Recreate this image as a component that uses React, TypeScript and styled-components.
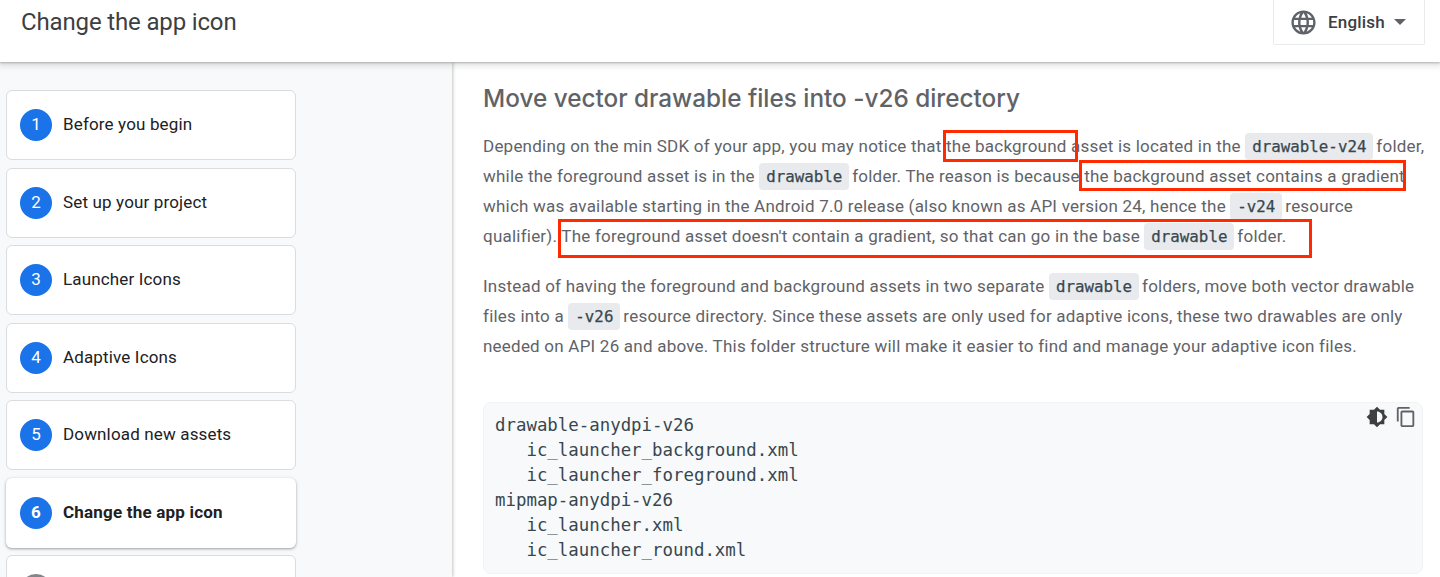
import React from 'react';
import styled, { createGlobalStyle } from 'styled-components';

const GlobalStyle = createGlobalStyle`
  html, body {
    margin: 0;
    height: 100%;
    overflow: hidden;
    background: #fff;
    font-family: Roboto, "Liberation Sans", sans-serif;
  }
`;

const Page = styled.div`
  display: flex;
  flex-direction: column;
  width: 1440px;
  height: 577px;
  overflow: hidden;
`;

const Header = styled.header`
  position: relative;
  z-index: 2;
  flex: 0 0 62px;
  display: flex;
  justify-content: space-between;
  align-items: flex-start;
  padding: 0 15px 0 21px;
  background: #fff;
  box-shadow: 0 1px 2px rgba(60, 64, 67, 0.3), 0 2px 6px 2px rgba(60, 64, 67, 0.15);
`;

const Title = styled.h1`
  margin: 0;
  font-size: 24px;
  font-weight: 400;
  line-height: 44px;
  letter-spacing: -0.15px;
  color: #3c4043;
`;

const LangButton = styled.div`
  display: flex;
  align-items: center;
  box-sizing: border-box;
  width: 152px;
  height: 45px;
  padding: 0 17px;
  border: 1px solid #e8eaed;
  border-top: none;
  border-radius: 0 0 2px 2px;
  font-size: 17px;
  font-weight: 500;
  letter-spacing: 0.2px;
  color: #3c4043;
`;

const LangLabel = styled.span`
  margin-left: 10px;
`;

const Caret = styled.span`
  margin-left: 9px;
  border-top: 6px solid #5f6368;
  border-left: 6.5px solid transparent;
  border-right: 6.5px solid transparent;
`;

const Body = styled.div`
  flex: 1;
  display: flex;
  min-height: 0;
`;

const Sidebar = styled.nav`
  position: relative;
  z-index: 1;
  flex: 0 0 452px;
  box-sizing: border-box;
  padding: 28px 0 0 6px;
  background: #f8f9fa;
  box-shadow: 1px 0 3px rgba(60, 64, 67, 0.3);
  display: flex;
  flex-direction: column;
  gap: 7.5px;
`;

const StepCard = styled.div<{ $active?: boolean }>`
  flex: 0 0 70px;
  box-sizing: border-box;
  width: 290px;
  display: flex;
  align-items: center;
  padding-left: ${p => (p.$active ? 14 : 13)}px;
  gap: 11px;
  background: #fff;
  border-radius: 6px;
  border: ${p => (p.$active ? 'none' : '1px solid #dadce0')};
  box-shadow: ${p =>
    p.$active
      ? '0 1px 2px rgba(60, 64, 67, 0.3), 0 1px 3px 1px rgba(60, 64, 67, 0.15)'
      : 'none'};
  font-size: 17px;
  font-weight: ${p => (p.$active ? 700 : 400)};
  letter-spacing: ${p => (p.$active ? 0.2 : 0.15)}px;
  color: #202124;
`;

const StepLabel = styled.span`
  margin-top: -2px;
`;

const StepNumber = styled.span<{ $pending?: boolean }>`
  flex: 0 0 32px;
  height: 32px;
  border-radius: 50%;
  background: ${p => (p.$pending ? '#80868b' : '#1a73e8')};
  color: #fff;
  font-size: 17px;
  letter-spacing: 0;
  line-height: 31px;
  text-align: center;
`;

const Content = styled.main`
  position: relative;
  flex: 1;
  box-sizing: border-box;
  padding: 18px 12px 0 31px;
  color: #5f6368;
  font-size: 17px;
  letter-spacing: 0.22px;
  line-height: 30px;
`;

const Heading = styled.h2`
  margin: 0 0 15px;
  font-family: Inter, sans-serif;
  font-size: 24.3px;
  font-weight: 550;
  letter-spacing: 0;
  line-height: 36px;
  color: #5f6368;
`;

const Paragraph = styled.p`
  margin: 0 0 20px;
`;

const InlineCode = styled.code`
  margin-right: -1.5px;
  padding: 4px 7px;
  border-radius: 4px;
  background: #e8eaed;
  color: #37474f;
  font-family: "DejaVu Sans Mono", monospace;
  font-size: 15.8px;
  line-height: 20px;
  letter-spacing: 0;
  -webkit-text-stroke: 0.25px #37474f;
`;

const CodeBlock = styled.div`
  position: relative;
  box-sizing: border-box;
  width: 940px;
  height: 172px;
  margin-top: 41px;
  padding: 10px 11px;
  border: 1px solid #f1f3f4;
  border-radius: 8px;
  background: #f8f9fa;
`;

const CodeText = styled.pre`
  margin: 0;
  font-family: "DejaVu Sans Mono", monospace;
  font-size: 17.4px;
  letter-spacing: 0;
  line-height: 25px;
  color: #37474f;
`;

const CodeTools = styled.div`
  position: absolute;
  top: 3px;
  right: 5px;
  display: flex;
  gap: 7px;
`;

const ToolIcon = styled.svg`
  display: block;
  width: 22px;
  height: 22px;
  fill: #5f6368;
`;

const BrightnessIcon = styled(ToolIcon)`
  fill: #3c4043;
`;

const GlobeIcon = styled(ToolIcon)`
  width: 29px;
  height: 29px;
  margin-left: -2px;
`;

const Highlight = styled.div<{ $left: number; $top: number; $width: number; $height: number }>`
  position: absolute;
  box-sizing: border-box;
  left: ${p => p.$left}px;
  top: ${p => p.$top}px;
  width: ${p => p.$width}px;
  height: ${p => p.$height}px;
  border: 3px solid #ff2a00;
`;

const steps = [
  'Before you begin',
  'Set up your project',
  'Launcher Icons',
  'Adaptive Icons',
  'Download new assets',
  'Change the app icon',
  '',
];

const codeListing = `drawable-anydpi-v26
   ic_launcher_background.xml
   ic_launcher_foreground.xml
mipmap-anydpi-v26
   ic_launcher.xml
   ic_launcher_round.xml`;

const App: React.FC = () => (
  <Page>
    <GlobalStyle />
    <Header>
      <Title>Change the app icon</Title>
      <LangButton>
        <GlobeIcon viewBox="0 0 24 24">
          <path d="M11.99 2C6.47 2 2 6.48 2 12s4.47 10 9.99 10C17.52 22 22 17.52 22 12S17.52 2 11.99 2zm6.93 6h-2.95c-.32-1.25-.78-2.45-1.38-3.56 1.84.63 3.37 1.91 4.33 3.56zM12 4.04c.83 1.2 1.48 2.53 1.91 3.96h-3.82c.43-1.43 1.08-2.76 1.91-3.96zM4.26 14C4.1 13.36 4 12.69 4 12s.1-1.36.26-2h3.38c-.08.66-.14 1.32-.14 2 0 .68.06 1.34.14 2H4.26zm.82 2h2.95c.32 1.25.78 2.45 1.38 3.56-1.84-.63-3.37-1.9-4.33-3.56zm2.95-8H5.08c.96-1.66 2.49-2.93 4.33-3.56C8.81 5.55 8.35 6.75 8.03 8zM12 19.96c-.83-1.2-1.48-2.53-1.91-3.96h3.82c-.43 1.43-1.08 2.76-1.91 3.96zM14.34 14H9.66c-.09-.66-.16-1.32-.16-2 0-.68.07-1.35.16-2h4.68c.09.65.16 1.32.16 2 0 .68-.07 1.34-.16 2zm.25 5.56c.6-1.11 1.06-2.31 1.38-3.56h2.95c-.96 1.65-2.49 2.93-4.33 3.56zM16.36 14c.08-.66.14-1.32.14-2 0-.68-.06-1.34-.14-2h3.38c.16.64.26 1.31.26 2s-.1 1.36-.26 2h-3.38z" />
        </GlobeIcon>
        <LangLabel>English</LangLabel>
        <Caret />
      </LangButton>
    </Header>
    <Body>
      <Sidebar>
        {steps.map((label, i) => (
          <StepCard key={i} $active={i === 5}>
            <StepNumber $pending={i > 5}>{i + 1}</StepNumber>
            <StepLabel>{label}</StepLabel>
          </StepCard>
        ))}
      </Sidebar>
      <Content>
        <Heading>Move vector drawable files into -v26 directory</Heading>
        <Paragraph>
          Depending on the min SDK of your app, you may notice that the background asset is located
          in the <InlineCode>drawable-v24</InlineCode> folder, while the foreground asset is in the{' '}
          <InlineCode>drawable</InlineCode> folder. The reason is because the background asset
          contains a gradient which was available starting in the Android 7.0 release (also known as
          API version 24, hence the <InlineCode>-v24</InlineCode> resource qualifier). The foreground
          asset doesn't contain a gradient, so that can go in the base{' '}
          <InlineCode>drawable</InlineCode> folder.
        </Paragraph>
        <Paragraph>
          Instead of having the foreground and background assets in two separate{' '}
          <InlineCode>drawable</InlineCode> folders, move both vector drawable files into a{' '}
          <InlineCode>-v26</InlineCode> resource directory. Since these assets are only used for
          adaptive icons, these two drawables are only needed on API 26 and above. This folder
          structure will make it easier to find and manage your adaptive icon files.
        </Paragraph>
        <CodeBlock>
          <CodeTools>
            <BrightnessIcon viewBox="0 0 24 24">
              <path
                fillRule="evenodd"
                d="M20 15.31L23.31 12 20 8.69V4h-4.69L12 .69 8.69 4H4v4.69L.69 12 4 15.31V20h4.69L12 23.31 15.31 20H20v-4.69zM12 18V6c3.31 0 6 2.69 6 6s-2.69 6-6 6z"
              />
            </BrightnessIcon>
            <ToolIcon viewBox="0 0 24 24">
              <path d="M16 1H4c-1.1 0-2 .9-2 2v14h2V3h12V1zm3 4H8c-1.1 0-2 .9-2 2v14c0 1.1.9 2 2 2h11c1.1 0 2-.9 2-2V7c0-1.1-.9-2-2-2zm0 16H8V7h11v14z" />
            </ToolIcon>
          </CodeTools>
          <CodeText>{codeListing}</CodeText>
        </CodeBlock>
        <Highlight $left={491} $top={68} $width={135} $height={32} />
        <Highlight $left={627} $top={98} $width={327} $height={31} />
        <Highlight $left={106} $top={157} $width={754} $height={39} />
      </Content>
    </Body>
  </Page>
);

export default App;
